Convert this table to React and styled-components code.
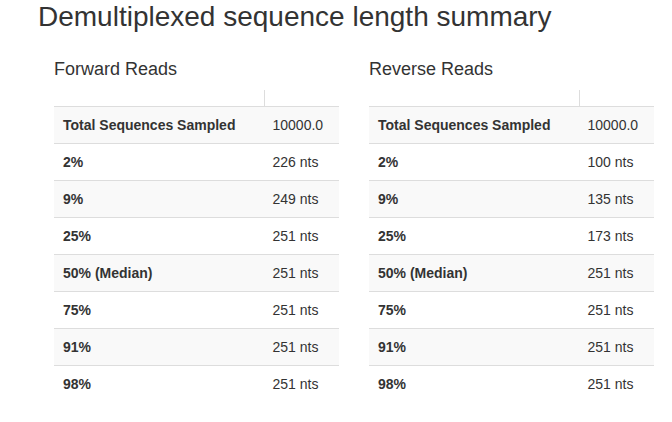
import React from "react";
import styled, { createGlobalStyle } from "styled-components";

const Global = createGlobalStyle`
  html, body { margin: 0; padding: 0; background: #fff; }
  body {
    font-family: "Liberation Sans", Arial, Helvetica, sans-serif;
    font-size: 14px;
    line-height: 1.42857;
    color: #333;
  }
`;

const Page = styled.div`
  padding: 0 0 0 38px;
`;

const Title = styled.h1`
  margin: 0;
  padding-top: 2px;
  font-size: 28px;
  font-weight: 400;
  line-height: 1.1;
  color: #333;
`;

const Columns = styled.div`
  display: grid;
  grid-template-columns: 285px 285px;
  column-gap: 30px;
  margin: 27px 0 0 16px;
`;

const Section = styled.section`
  display: flex;
  flex-direction: column;
`;

const Heading = styled.h4`
  margin: 0 0 10px;
  font-size: 18px;
  font-weight: 400;
  line-height: 1.1;
  color: #333;
`;

const Table = styled.table`
  width: 100%;
  border-collapse: collapse;
  border-spacing: 0;
`;

const HeadCell = styled.th`
  height: 16px;
  padding: 0;
  border-bottom: 1px solid #ddd;
  border-left: ${(p) => (p.$divider ? "1px solid #ddd" : "none")};
  width: ${(p) => (p.$divider ? "74px" : "auto")};
`;

const Row = styled.tr`
  background: ${(p) => (p.$striped ? "#f9f9f9" : "#fff")};
`;

const Cell = styled.td`
  padding: 8px 8px 8px 9px;
  height: 20px;
  border-top: ${(p) => (p.$first ? "none" : "1px solid #ddd")};
  font-weight: ${(p) => (p.$label ? 700 : 400)};
  font-size: 14px;
  line-height: 20px;
  color: #333;
  text-align: left;
  vertical-align: top;
`;

const ValueCell = styled(Cell)`
  padding-left: 8px;
`;

const forward = [
  ["Total Sequences Sampled", "10000.0"],
  ["2%", "226 nts"],
  ["9%", "249 nts"],
  ["25%", "251 nts"],
  ["50% (Median)", "251 nts"],
  ["75%", "251 nts"],
  ["91%", "251 nts"],
  ["98%", "251 nts"],
];

const reverse = [
  ["Total Sequences Sampled", "10000.0"],
  ["2%", "100 nts"],
  ["9%", "135 nts"],
  ["25%", "173 nts"],
  ["50% (Median)", "251 nts"],
  ["75%", "251 nts"],
  ["91%", "251 nts"],
  ["98%", "251 nts"],
];

function SummaryTable({ title, rows }) {
  return (
    <Section>
      <Heading>{title}</Heading>
      <Table>
        <thead>
          <tr>
            <HeadCell />
            <HeadCell $divider />
          </tr>
        </thead>
        <tbody>
          {rows.map(([k, v], i) => (
            <Row key={k} $striped={i % 2 === 0}>
              <Cell $label $first={i === 0}>{k}</Cell>
              <ValueCell $first={i === 0}>{v}</ValueCell>
            </Row>
          ))}
        </tbody>
      </Table>
    </Section>
  );
}

export default function App() {
  return (
    <>
      <Global />
      <Page>
        <Title>Demultiplexed sequence length summary</Title>
        <Columns>
          <SummaryTable title="Forward Reads" rows={forward} />
          <SummaryTable title="Reverse Reads" rows={reverse} />
        </Columns>
      </Page>
    </>
  );
}
